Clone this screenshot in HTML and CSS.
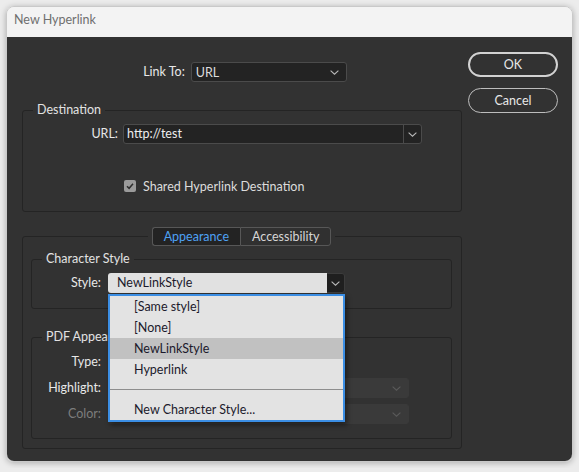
FILE: index.html
```html
<!DOCTYPE html>
<html>
<head>
<meta charset="utf-8">
<title>New Hyperlink</title>
<link rel="stylesheet" href="styles.css">
</head>
<body>
<div class="window">
  <div class="titlebar">New Hyperlink</div>
  <div class="client">
    <div class="main">
      <div class="linkrow">
        <span class="label">Link To:</span>
        <div class="select link-select">
          <span class="value">URL</span>
          <svg class="chev" viewBox="0 0 9 5" width="9" height="5"><path d="M0.6 0.6 L4.5 4.2 L8.4 0.6"/></svg>
        </div>
      </div>

      <fieldset class="group dest">
        <legend>Destination</legend>
        <div class="form-grid dest-grid">
          <span class="label">URL:</span>
          <div class="combo">
            <span class="value">http://test</span>
            <span class="combo-btn"><svg class="chev" viewBox="0 0 9 5" width="9" height="5"><path d="M0.6 0.6 L4.5 4.2 L8.4 0.6"/></svg></span>
          </div>
          <span></span>
          <div class="check">
            <span class="box"><svg viewBox="0 0 12 12" width="12" height="12"><path d="M3 6.2 L5.1 8.3 L9 3.8"/></svg></span>
            <span>Shared Hyperlink Destination</span>
          </div>
        </div>
      </fieldset>

      <fieldset class="group tabs-group">
        <legend class="tabs"><span class="tab active">Appearance</span><span class="tab">Accessibility</span></legend>

        <fieldset class="group inner charstyle">
          <legend>Character Style</legend>
          <div class="form-grid inner-grid">
            <span class="label">Style:</span>
            <div class="style-wrap">
              <div class="style-select">
                <span class="value">NewLinkStyle</span>
                <span class="style-btn"><svg class="chev" viewBox="0 0 9 5" width="9" height="5"><path d="M0.6 0.6 L4.5 4.2 L8.4 0.6"/></svg></span>
              </div>
              <div class="popup">
                <div class="item">[Same style]</div>
                <div class="item">[None]</div>
                <div class="item selected">NewLinkStyle</div>
                <div class="item">Hyperlink</div>
                <div class="sep"></div>
                <div class="item">New Character Style...</div>
              </div>
            </div>
          </div>
        </fieldset>

        <fieldset class="group inner pdf">
          <legend>PDF Appearance</legend>
          <div class="form-grid inner-grid pdf-grid">
            <span class="label">Type:</span>
            <div class="select dim type-select"><span class="value"></span></div>
            <span class="label">Highlight:</span>
            <div class="select dim wide"><span class="value"></span><svg class="chev" viewBox="0 0 9 5" width="9" height="5"><path d="M0.6 0.6 L4.5 4.2 L8.4 0.6"/></svg></div>
            <span class="label disabled">Color:</span>
            <div class="select dim wide"><span class="value"></span><svg class="chev" viewBox="0 0 9 5" width="9" height="5"><path d="M0.6 0.6 L4.5 4.2 L8.4 0.6"/></svg></div>
          </div>
        </fieldset>
      </fieldset>
    </div>

    <div class="buttons">
      <button class="btn ok">OK</button>
      <button class="btn">Cancel</button>
    </div>
  </div>
</div>
</body>
</html>
```

FILE: styles.css
```css
* { box-sizing: border-box; }

html, body {
  margin: 0;
  padding: 0;
  background: #ececec;
}

body {
  font-family: "Lato", "Liberation Sans", sans-serif;
  font-size: 12.5px;
  color: #e6e6e6;
  padding: 6px;
}

.window {
  width: 567px;
  height: 456px;
  border-radius: 8px;
  overflow: hidden;
  display: flex;
  flex-direction: column;
  box-shadow: 0 1px 6px rgba(0,0,0,0.28);
  border: 1px solid #c9c9c9;
}

.titlebar {
  height: 30px;
  background: #f3f3f3;
  color: #6f6f6f;
  padding-left: 7px;
  line-height: 26px;
  flex: none;
}

.client {
  flex: 1;
  background: #323232;
  display: flex;
  align-items: flex-start;
  padding: 0 14px 16px 15px;
  gap: 6px;
}

.main {
  flex: none;
  width: 440px;
  padding-top: 25px;
  display: flex;
  flex-direction: column;
}

.label {
  color: #e8e8e8;
  text-align: right;
  line-height: 20px;
  white-space: nowrap;
}
.label.disabled { color: #7d7d7d; }

.value { white-space: nowrap; }

.chev path {
  fill: none;
  stroke: #b9b9b9;
  stroke-width: 1.1;
}

/* Link To row */
.linkrow {
  display: flex;
  justify-content: center;
  gap: 6px;
  height: 20px;
  padding-left: 6px;
}

.select {
  height: 20px;
  border: 1px solid #4b4b4b;
  border-radius: 3px;
  background: #232323;
  display: flex;
  align-items: center;
  justify-content: space-between;
  padding: 0 7px 0 4px;
  color: #dcdcdc;
}

.link-select { width: 156px; }

/* group boxes */
.group {
  margin: 0;
  padding: 0;
  min-width: 0;
  border: 1px solid #242424;
  border-radius: 3px;
}

.group > legend {
  margin-left: 10px;
  padding: 0 4px;
  line-height: 16px;
  color: #e2e2e2;
}

.dest {
  margin-top: 20px;
  padding: 6px 0 15px 0;
}

.form-grid {
  display: grid;
  align-items: center;
}

.dest-grid {
  grid-template-columns: 95px 299px;
  column-gap: 5px;
  row-gap: 32px;
}

.combo {
  height: 20px;
  border: 1px solid #4b4b4b;
  border-radius: 3px;
  background: #232323;
  display: flex;
  align-items: stretch;
  color: #eeeeee;
}
.combo .value {
  flex: 1;
  padding-left: 3px;
  line-height: 18px;
}
.combo-btn {
  width: 18px;
  border-left: 1px solid #4b4b4b;
  display: flex;
  align-items: center;
  justify-content: center;
}

.check {
  display: flex;
  align-items: center;
  gap: 7px;
  height: 20px;
  margin-left: 1px;
  color: #dcdcdc;
}
.box {
  width: 12px;
  height: 12px;
  border-radius: 2px;
  background: #9b9b9b;
  display: flex;
}
.box path {
  fill: none;
  stroke: #2e2e2e;
  stroke-width: 1.5;
}

/* tabs group */
.tabs-group {
  margin-top: 15px;
  padding: 5px 9px 9px 8px;
}

.group > legend.tabs {
  margin: 0 auto;
  padding: 0 4px;
  display: flex;
  line-height: 17px;
}

.tab {
  border: 1px solid #575757;
  background: #303030;
  color: #d6d6d6;
  padding: 0 11px;
  height: 19px;
}
.tab.active {
  background: #232323;
  color: #4ea1f3;
  border-radius: 3px 0 0 3px;
  border-right: none;
}
.tab:last-child { border-radius: 0 3px 3px 0; }

.inner {
  padding: 6px 0 14px 0;
}

.charstyle { padding-top: 6px; padding-bottom: 15px; }

.inner-grid {
  grid-template-columns: 69px auto;
  column-gap: 7px;
  row-gap: 6px;
  justify-content: start;
}

.style-wrap {
  position: relative;
  width: 237px;
}

.style-select {
  height: 20px;
  display: flex;
  border-radius: 3px;
  overflow: hidden;
}
.style-select .value {
  flex: 1;
  background: #e1e1e1;
  color: #1c1a2c;
  padding-left: 9px;
  line-height: 20px;
}
.style-btn {
  width: 18px;
  background: #1f1f1f;
  border: 1px solid #3c3c3c;
  border-left: none;
  border-radius: 0 3px 3px 0;
  display: flex;
  align-items: center;
  justify-content: center;
}

.popup {
  position: absolute;
  left: 0;
  top: 21px;
  width: 237px;
  z-index: 10;
  background: #e3e3e3;
  border: 2px solid #3b8ee4;
  box-shadow: 2px 3px 5px rgba(0,0,0,0.45);
  color: #1c1a2c;
  display: flex;
  flex-direction: column;
}
.popup .item {
  height: 21px;
  line-height: 21px;
  padding-left: 24px;
  white-space: nowrap;
}
.popup .item.selected { background: #c1c1c1; }
.popup .sep {
  height: 19px;
  display: flex;
  align-items: center;
}
.popup .sep::before {
  content: "";
  flex: 1;
  height: 1px;
  background: #8e8e8e;
}

.pdf {
  margin-top: 20px;
  padding-top: 7px;
}

.select.dim {
  background: #3a3a3a;
  border-color: #3a3a3a;
}
.select.dim .chev path { stroke: #5a5a5a; }
.type-select { width: 160px; }
.select.wide { width: 301px; }

/* buttons */
.buttons {
  width: 90px;
  padding-top: 15px;
  display: flex;
  flex-direction: column;
  gap: 11px;
}

.btn {
  height: 25px;
  border-radius: 13px;
  border: 1.5px solid #bdbdbd;
  background: transparent;
  color: #e8e8e8;
  font-family: inherit;
  font-size: 12.5px;
  padding: 0;
}
.btn.ok {
  border: 2px solid #d2d2d2;
}
```
